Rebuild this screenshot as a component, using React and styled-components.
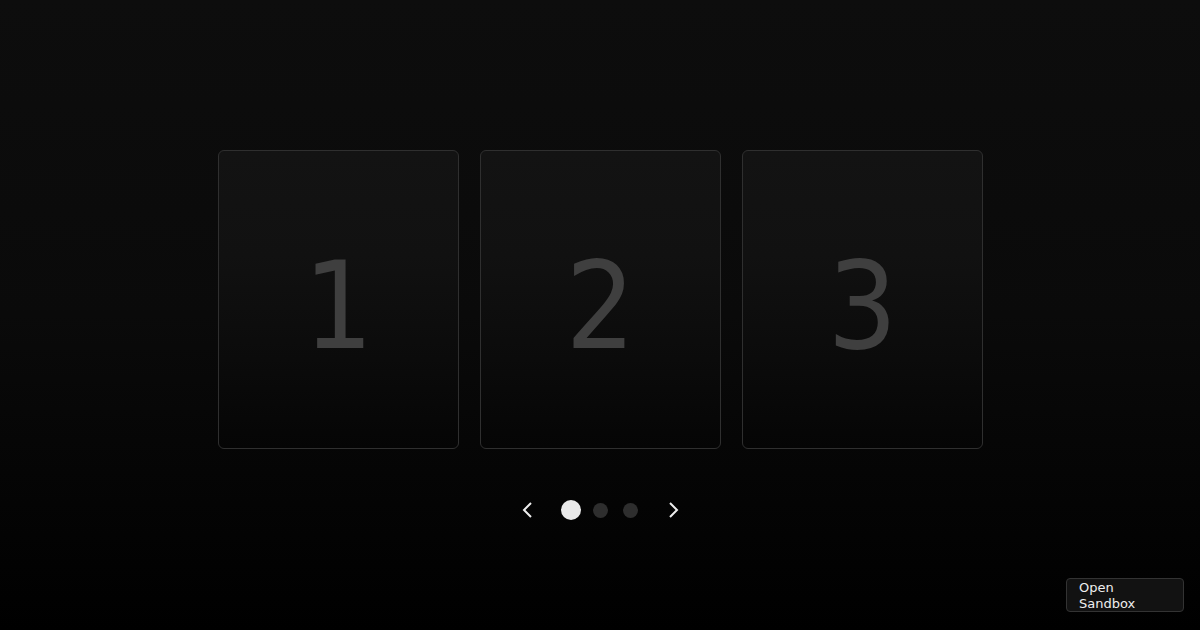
import React from 'react';
import styled, { createGlobalStyle } from 'styled-components';

const GlobalStyle = createGlobalStyle`
  html, body {
    margin: 0;
    padding: 0;
    background: #000;
  }
  body {
    font-family: "DejaVu Sans", sans-serif;
  }
`;

const Page = styled.main`
  position: relative;
  width: 1200px;
  height: 630px;
  overflow: hidden;
  background: linear-gradient(to bottom, #0d0d0d 0%, #0a0a0a 50%, #050505 75%, #000 100%);
  display: flex;
  flex-direction: column;
  align-items: center;
  padding-top: 150px;
  box-sizing: border-box;
`;

const Track = styled.div`
  display: flex;
  gap: 21px;
  margin-left: 1px;
`;

const Card = styled.div`
  width: 241px;
  height: 299px;
  box-sizing: border-box;
  border: 1px solid #2f2f2f;
  border-radius: 6px;
  background: linear-gradient(to bottom, #131313 0%, #111 35%, #0b0b0b 70%, #050505 100%);
  display: flex;
  align-items: center;
  justify-content: center;
  color: #3f3f3f;
  font-family: "DejaVu Sans Condensed", "DejaVu Sans", sans-serif;
  font-size: 122px;
  line-height: 1;
  padding-top: 12px;
`;

const Controls = styled.div`
  display: flex;
  align-items: center;
  margin-top: 50px;
  height: 22px;
`;

const Arrow = styled.button`
  background: none;
  border: none;
  padding: 0;
  width: 20px;
  height: 20px;
  display: flex;
  align-items: center;
  justify-content: center;
  color: #eee;
  cursor: pointer;
`;

const Dots = styled.div`
  display: flex;
  align-items: center;
  gap: 15px;
  margin: 0 25px 0 23px;
`;

const Dot = styled.span`
  display: block;
  width: ${(p) => (p.active ? 20 : 15)}px;
  height: ${(p) => (p.active ? 20 : 15)}px;
  margin-right: ${(p) => (p.active ? -3 : 0)}px;
  border-radius: 50%;
  background: ${(p) => (p.active ? '#eaeaea' : '#2e2e2e')};
`;

const SandboxButton = styled.button`
  position: absolute;
  right: 16px;
  bottom: 18px;
  width: 118px;
  height: 34px;
  box-sizing: border-box;
  background: #121212;
  border: 1px solid #333;
  border-radius: 4px;
  color: #eee;
  font-family: "DejaVu Sans", sans-serif;
  font-size: 13px;
  line-height: 16px;
  text-align: left;
  padding: 1px 0 0 12px;
`;

const Chevron = ({ dir }) => (
  <svg width="14" height="18" viewBox="0 0 14 18" fill="none">
    <path
      d={dir === 'left' ? 'M10 2 L3 9 L10 16' : 'M4 2 L11 9 L4 16'}
      stroke="currentColor"
      strokeWidth="2"
    />
  </svg>
);

const slides = [1, 2, 3];

export default function App() {
  return (
    <>
      <GlobalStyle />
      <Page>
        <Track>
          {slides.map((n) => (
            <Card key={n}>{n}</Card>
          ))}
        </Track>
        <Controls>
          <Arrow aria-label="Previous">
            <Chevron dir="left" />
          </Arrow>
          <Dots>
            {slides.map((n) => (
              <Dot key={n} active={n === 1} />
            ))}
          </Dots>
          <Arrow aria-label="Next">
            <Chevron dir="right" />
          </Arrow>
        </Controls>
        <SandboxButton>
          Open
          <br />
          Sandbox
        </SandboxButton>
      </Page>
    </>
  );
}
